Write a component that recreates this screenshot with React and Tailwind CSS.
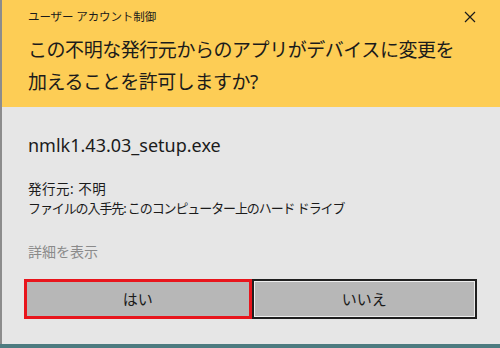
export default function App() {
    return (
        <div className="w-[500px] h-[348px] flex flex-col bg-[#4d7b80] overflow-hidden font-['Noto_Sans','Noto_Sans_CJK_JP',sans-serif] text-[#1b1b1b]">
            <div className="flex-1 flex flex-col border-l-2 border-[#8c8c8c]">
                {/* 黄色ヘッダー */}
                <div className="h-[107px] bg-[#fdcd55] px-[26px] pt-[10px]">
                    <div className="flex items-center justify-between h-[14px]">
                        <span className="text-[11.5px] leading-[14px] tracking-[-0.1px]">ユーザー アカウント制御</span>
                        <svg width="12" height="12" viewBox="0 0 12 12" className="mr-[-2px]">
                            <path d="M1 1 L11 11 M11 1 L1 11" stroke="#1b1b1b" strokeWidth="1.2" />
                        </svg>
                    </div>
                    <p className="mt-[10px] text-[19px] leading-[32px] tracking-[-0.45px]">
                        この不明な発行元からのアプリがデバイスに変更を<br />
                        加えることを許可しますか?
                    </p>
                </div>

                {/* 本文 */}
                <div className="flex-1 bg-[#e6e6e6] flex flex-col pt-[26px]">
                    <div className="px-[26px]">
                        <p className="text-[18px] leading-[24px]">nmlk1.43.03_setup.exe</p>
                        <div className="mt-[23px] text-[13.5px] leading-[19px]">
                            <p className="tracking-[0.5px]">発行元: 不明</p>
                            <p className="text-[13px] tracking-[-1.1px]">ファイルの入手先: このコンピューター上のハード ドライブ</p>
                        </div>
                        <p className="mt-[25px] text-[14px] leading-[18px] text-[#8a8a8a]">詳細を表示</p>
                    </div>
                    <div className="mt-[18px] pl-[22px] pr-[23px] flex h-[40px]">
                        <button className="flex-1 border-[3px] border-[#e8151c] bg-[#b7b7b7] text-[15px]">はい</button>
                        <button className="flex-1 border-2 border-[#1f1f1f] bg-[#b7b7b7] shadow-[inset_0_0_0_1px_#ededed] text-[15px]">いいえ</button>
                    </div>
                </div>
            </div>
            <div className="h-[4px] bg-[#4d7b80]" />
        </div>
    );
}
